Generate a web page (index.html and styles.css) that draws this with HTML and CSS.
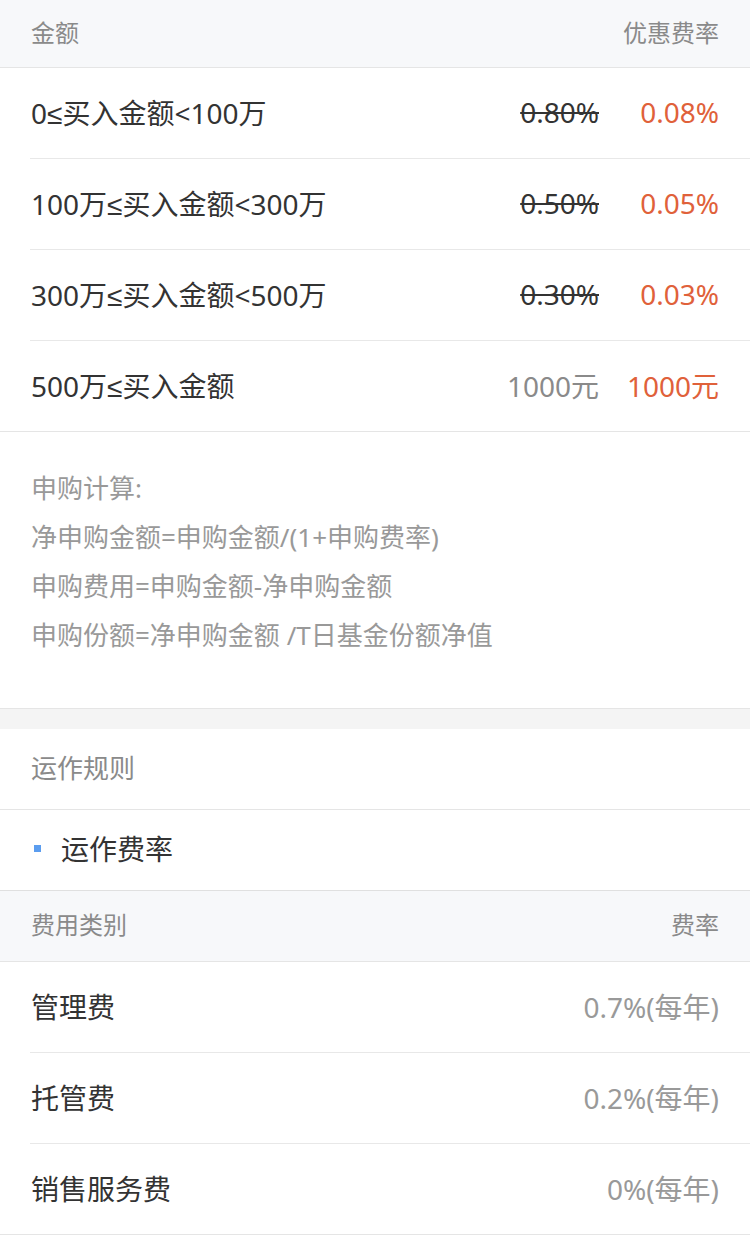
FILE: index.html
```html
<!DOCTYPE html>
<html lang="zh-CN">

<head>
    <meta charset="UTF-8">
    <meta name="viewport" content="width=device-width, initial-scale=1.0">
    <title>费率</title>
    <link rel="stylesheet" href="styles.css">
</head>

<body>
    <div class="table-head">
        <span>金额</span>
        <span>优惠费率</span>
    </div>
    <ul class="rows">
        <li class="row">
            <span class="label">0≤买入金额&lt;100万</span>
            <span class="prices"><s class="old">0.80%</s><span class="new">0.08%</span></span>
        </li>
        <li class="row">
            <span class="label">100万≤买入金额&lt;300万</span>
            <span class="prices"><s class="old">0.50%</s><span class="new">0.05%</span></span>
        </li>
        <li class="row">
            <span class="label">300万≤买入金额&lt;500万</span>
            <span class="prices"><s class="old">0.30%</s><span class="new">0.03%</span></span>
        </li>
        <li class="row">
            <span class="label">500万≤买入金额</span>
            <span class="prices"><span class="old plain">1000元</span><span class="new">1000元</span></span>
        </li>
    </ul>

    <div class="notes">
        <p>申购计算:</p>
        <p>净申购金额=申购金额/(1+申购费率)</p>
        <p>申购费用=申购金额-净申购金额</p>
        <p>申购份额=净申购金额 /T日基金份额净值</p>
    </div>

    <div class="gap"></div>

    <div class="section-title">运作规则</div>
    <div class="sub-title"><i class="dot"></i>运作费率</div>

    <div class="table-head tall">
        <span>费用类别</span>
        <span>费率</span>
    </div>
    <ul class="rows">
        <li class="row">
            <span class="label">管理费</span>
            <span class="value">0.7%(每年)</span>
        </li>
        <li class="row">
            <span class="label">托管费</span>
            <span class="value">0.2%(每年)</span>
        </li>
        <li class="row">
            <span class="label">销售服务费</span>
            <span class="value">0%(每年)</span>
        </li>
    </ul>
</body>

</html>
```

FILE: styles.css
```css
* {
    box-sizing: border-box;
}

body {
    margin: 0;
    background: #fff;
    font-family: "Noto Sans", "Liberation Sans", "Noto Sans CJK SC", sans-serif;
    color: #333;
}

.table-head {
    display: flex;
    justify-content: space-between;
    align-items: center;
    height: 68px;
    padding: 0 31px 5px;
    background: #f7f8fa;
    border-bottom: 1px solid #e5e5e5;
    font-size: 24px;
    color: #8a8a8a;
}

.table-head.tall {
    height: 71px;
}

.rows {
    list-style: none;
    margin: 0;
    padding: 0;
    border-bottom: 1px solid #e5e5e5;
}

.row {
    display: flex;
    justify-content: space-between;
    align-items: center;
    height: 91px;
    margin-left: 30px;
    padding: 0 31px 3px 0;
    border-bottom: 1px solid #e8e8e8;
    font-size: 28px;
    white-space: nowrap;
}

.row:last-child {
    height: 90px;
    border-bottom: none;
}

.label {
    padding-left: 1px;
    color: #333;
}

.prices {
    display: flex;
    gap: 40px;
}

.old {
    color: #333;
    text-decoration-thickness: 2px;
}

.old.plain {
    color: #8a8a8a;
}

.new {
    display: flex;
    justify-content: flex-end;
    width: 80px;
    color: #e0613a;
}

.value {
    color: #999;
}

.notes {
    padding: 32px 31px 48px;
    font-size: 26px;
    color: #999;
}

.notes p {
    margin: 0;
    line-height: 49px;
}

.gap {
    height: 21px;
    background: #f4f4f4;
    border-top: 1px solid #e5e5e5;
}

.section-title {
    height: 81px;
    padding: 0 0 5px 31px;
    display: flex;
    align-items: center;
    border-bottom: 1px solid #e5e5e5;
    font-size: 26px;
    color: #8a8a8a;
}

.sub-title {
    display: flex;
    align-items: center;
    height: 81px;
    padding: 0 0 4px 34px;
    border-bottom: 1px solid #e0e0e0;
    font-size: 28px;
    color: #333;
}

.dot {
    width: 7px;
    height: 7px;
    margin-right: 20px;
    background: #5b9def;
}
```
